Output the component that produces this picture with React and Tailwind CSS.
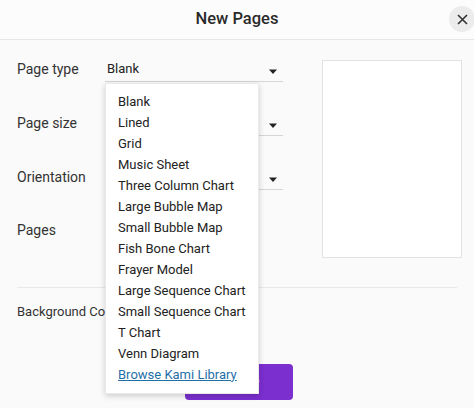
import React from "react";

const items = [
  "Blank",
  "Lined",
  "Grid",
  "Music Sheet",
  "Three Column Chart",
  "Large Bubble Map",
  "Small Bubble Map",
  "Fish Bone Chart",
  "Frayer Model",
  "Large Sequence Chart",
  "Small Sequence Chart",
  "T Chart",
  "Venn Diagram",
];

function Arrow() {
  return (
    <svg width="10" height="6" viewBox="0 0 10 6" className="mt-[6px] mr-[5px]">
      <path d="M1 0.5 L9 0.5 L5 5 Z" fill="#222" />
    </svg>
  );
}

function Select({ value }) {
  return (
    <div className="w-[178px] h-[26px] border-b border-[#d6d6d6] flex items-center justify-between pl-[2px]">
      <span className="text-[13px] text-[#222]">{value}</span>
      <Arrow />
    </div>
  );
}

export default function App() {
  return (
    <div
      className="relative w-[474px] h-[408px] overflow-hidden bg-[#fafafa] text-[#333]"
      style={{ fontFamily: "Roboto, 'Liberation Sans', sans-serif" }}
    >
      <div className="h-[40px] border-b border-[#e6e6e6] bg-[#fcfcfc] flex items-center justify-center relative">
        <span className="text-[16.5px] font-medium text-[#2a2a2a]">New Pages</span>
        <div className="absolute right-[-1px] top-[6px] w-[26px] h-[26px] rounded-full bg-[#ececec] flex items-center justify-center">
          <svg width="11" height="11" viewBox="0 0 11 11">
            <path d="M1 1 L10 10 M10 1 L1 10" stroke="#333" strokeWidth="1.6" />
          </svg>
        </div>
      </div>

      <div className="flex pl-[17px] pr-[12px]">
        <div className="flex flex-col w-[266px] pt-[2px]">
          <div className="h-[54px] flex items-center">
            <span className="w-[88px] text-[14px]">Page type</span>
            <Select value="Blank" />
          </div>
          <div className="h-[54px] flex items-center">
            <span className="w-[88px] text-[14px]">Page size</span>
            <Select value="" />
          </div>
          <div className="h-[54px] flex items-center">
            <span className="w-[88px] text-[14px]">Orientation</span>
            <Select value="" />
          </div>
          <div className="h-[52px] flex items-center">
            <span className="w-[88px] text-[14px]">Pages</span>
          </div>
        </div>
        <div className="ml-[39px] mt-[20px] w-[141px] h-[198px] bg-white border border-[#e3e3e3]" />
      </div>

      <div className="mx-[17px] mt-[29px] border-t border-[#e8e8e8]" />
      <div className="pl-[17px] mt-[14px] text-[13px] text-[#333]">Background Color</div>

      <div className="flex justify-center mt-[42px] pl-[4px]">
        <div className="w-[108px] h-[36px] rounded-[4px] bg-[#7b2fcf] flex items-center justify-center">
          <span className="text-white text-[14px] font-medium">Create</span>
        </div>
      </div>

      <div className="absolute left-[105px] top-[83px] w-[154px] bg-white shadow-[0_2px_6px_rgba(0,0,0,0.18)] pt-[7px] pb-[8px] border border-[#eaeaea]">
        {items.map((it) => (
          <div key={it} className="h-[21px] flex items-center pl-[12px] text-[13px] text-[#222]">
            {it}
          </div>
        ))}
        <div className="h-[21px] flex items-center pl-[12px] text-[13px] text-[#1f6fa8] underline">
          Browse Kami Library
        </div>
      </div>
    </div>
  );
}
